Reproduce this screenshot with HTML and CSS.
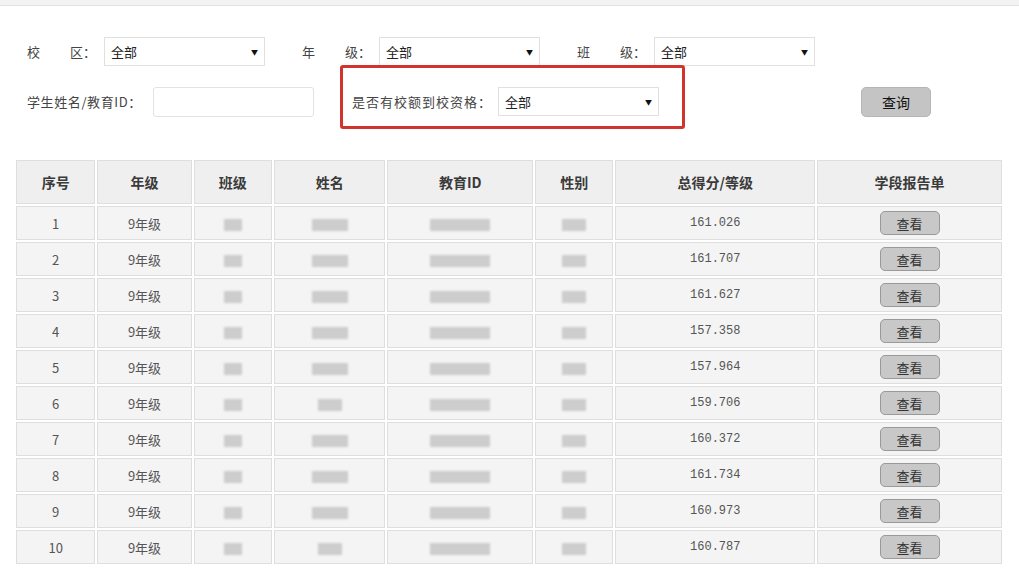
FILE: index.html
```html
<!DOCTYPE html>
<html lang="zh-CN">
<head>
    <meta charset="UTF-8">
    <title>成绩查询</title>
    <link rel="stylesheet" href="styles.css">
</head>
<body>

    <div class="topbar"></div>

    <div class="filters">
        <div class="filter-row">
            <div class="field">
                <span class="label spaced"><span>校</span><span>区：</span></span>
                <div class="select"><span>全部</span><span class="arrow">▼</span></div>
            </div>
            <div class="field">
                <span class="label spaced"><span>年</span><span>级：</span></span>
                <div class="select"><span>全部</span><span class="arrow">▼</span></div>
            </div>
            <div class="field">
                <span class="label spaced"><span>班</span><span>级：</span></span>
                <div class="select"><span>全部</span><span class="arrow">▼</span></div>
            </div>
        </div>
        <div class="filter-row second">
            <div class="field">
                <span class="label name-label">学生姓名/教育ID：</span>
                <input type="text" class="text-input">
            </div>
            <div class="field highlight">
                <span class="label quota-label">是否有校额到校资格：</span>
                <div class="select"><span>全部</span><span class="arrow">▼</span></div>
            </div>
            <button class="btn-query">查询</button>
        </div>
    </div>

    <table class="records">
        <colgroup>
            <col style="width:79px">
            <col style="width:94px">
            <col style="width:78px">
            <col style="width:111px">
            <col style="width:145px">
            <col style="width:78px">
            <col style="width:199px">
            <col style="width:184px">
        </colgroup>
        <thead>
            <tr>
                <th>序号</th><th>年级</th><th>班级</th><th>姓名</th><th>教育ID</th><th>性别</th><th>总得分/等级</th><th>学段报告单</th>
            </tr>
        </thead>
        <tbody>
            <tr><td>1</td><td>9年级</td><td><i class="blur b-class"></i></td><td><i class="blur b-name"></i></td><td><i class="blur b-id"></i></td><td><i class="blur b-sex"></i></td><td class="score">161.026</td><td><button class="btn-view">查看</button></td></tr>
            <tr><td>2</td><td>9年级</td><td><i class="blur b-class"></i></td><td><i class="blur b-name"></i></td><td><i class="blur b-id"></i></td><td><i class="blur b-sex"></i></td><td class="score">161.707</td><td><button class="btn-view">查看</button></td></tr>
            <tr><td>3</td><td>9年级</td><td><i class="blur b-class"></i></td><td><i class="blur b-name"></i></td><td><i class="blur b-id"></i></td><td><i class="blur b-sex"></i></td><td class="score">161.627</td><td><button class="btn-view">查看</button></td></tr>
            <tr><td>4</td><td>9年级</td><td><i class="blur b-class"></i></td><td><i class="blur b-name"></i></td><td><i class="blur b-id"></i></td><td><i class="blur b-sex"></i></td><td class="score">157.358</td><td><button class="btn-view">查看</button></td></tr>
            <tr><td>5</td><td>9年级</td><td><i class="blur b-class"></i></td><td><i class="blur b-name"></i></td><td><i class="blur b-id"></i></td><td><i class="blur b-sex"></i></td><td class="score">157.964</td><td><button class="btn-view">查看</button></td></tr>
            <tr><td>6</td><td>9年级</td><td><i class="blur b-class"></i></td><td><i class="blur b-name short"></i></td><td><i class="blur b-id"></i></td><td><i class="blur b-sex"></i></td><td class="score">159.706</td><td><button class="btn-view">查看</button></td></tr>
            <tr><td>7</td><td>9年级</td><td><i class="blur b-class"></i></td><td><i class="blur b-name"></i></td><td><i class="blur b-id"></i></td><td><i class="blur b-sex"></i></td><td class="score">160.372</td><td><button class="btn-view">查看</button></td></tr>
            <tr><td>8</td><td>9年级</td><td><i class="blur b-class"></i></td><td><i class="blur b-name"></i></td><td><i class="blur b-id"></i></td><td><i class="blur b-sex"></i></td><td class="score">161.734</td><td><button class="btn-view">查看</button></td></tr>
            <tr><td>9</td><td>9年级</td><td><i class="blur b-class"></i></td><td><i class="blur b-name"></i></td><td><i class="blur b-id"></i></td><td><i class="blur b-sex"></i></td><td class="score">160.973</td><td><button class="btn-view">查看</button></td></tr>
            <tr><td>10</td><td>9年级</td><td><i class="blur b-class"></i></td><td><i class="blur b-name short"></i></td><td><i class="blur b-id"></i></td><td><i class="blur b-sex"></i></td><td class="score">160.787</td><td><button class="btn-view">查看</button></td></tr>
        </tbody>
    </table>

</body>
</html>
```

FILE: styles.css
```css
body {
    margin: 0;
    font-family: "Noto Sans CJK SC", "Liberation Sans", sans-serif;
    font-size: 13px;
    color: #333;
    background-color: #fff;
}
.topbar {
    height: 5px;
    background-color: #f3f3f3;
    border-bottom: 1px solid #e2e2e2;
}
.filters {
    padding: 31px 0 0 27px;
}
.filter-row {
    display: flex;
    align-items: center;
    height: 29px;
}
.filter-row .field {
    display: flex;
    align-items: center;
    margin-right: 37px;
}
.filter-row.second {
    margin-top: 21px;
    align-items: flex-start;
}
.label {
    color: #444;
    white-space: nowrap;
    margin-right: 8px;
}
.label.spaced {
    width: 69px;
    display: flex;
    justify-content: space-between;
}
.name-label {
    width: 118px;
    letter-spacing: 0.6px;
    line-height: 30px;
}
.quota-label {
    width: 146px;
    letter-spacing: 1px;
    line-height: 29px;
}
.select {
    width: 147px;
    height: 27px;
    padding: 0 6px;
    border: 1px solid #e0e0e0;
    background: #fff;
    display: flex;
    align-items: center;
    justify-content: space-between;
    color: #222;
}
.arrow {
    font-size: 7px;
    color: #111;
}
.text-input {
    width: 159px;
    height: 28px;
    padding: 0;
    border: 1px solid #e3e3e3;
    border-radius: 3px;
}
.filter-row.second .field {
    margin-right: 26px;
}
.highlight {
    margin-top: -22px;
    padding: 19px 23px 10px 9px;
    border: 3px solid #d0342c;
    border-radius: 3px;
}
.highlight .label {
    margin-right: 0;
}
.filter-row.second .highlight {
    margin-right: 176px;
}
.btn-query {
    width: 70px;
    height: 30px;
    border: 1px solid #b5b5b5;
    border-radius: 5px;
    background-color: #c4c4c4;
    font-family: inherit;
    font-size: 14px;
    color: #111;
}
.records {
    margin: 42px 0 0 14px;
    border-collapse: separate;
    border-spacing: 2px;
    table-layout: fixed;
    width: 990px;
}
.records th, .records td {
    border: 1px solid #dedede;
    background-color: #f4f4f4;
    text-align: center;
    padding: 0;
}
.records th {
    height: 42px;
    font-size: 14px;
    font-weight: bold;
    color: #3a3a3a;
    background-color: #efefef;
}
.records td {
    height: 32px;
    color: #555;
    font-size: 13px;
}
.records td.score {
    font-family: "Liberation Mono", "DejaVu Sans Mono", monospace;
    font-size: 12px;
}
.blur {
    display: inline-block;
    height: 12px;
    vertical-align: middle;
    background-color: #cdcdcd;
    filter: blur(1px);
}
.b-class { width: 18px; }
.b-name { width: 36px; }
.b-name.short { width: 24px; }
.b-id { width: 60px; }
.b-sex { width: 24px; }
.btn-view {
    width: 60px;
    height: 24px;
    border: 1px solid #999;
    border-radius: 5px;
    background-color: #c8c8c8;
    font-family: inherit;
    font-size: 13px;
    color: #333;
    padding: 0;
}
```
